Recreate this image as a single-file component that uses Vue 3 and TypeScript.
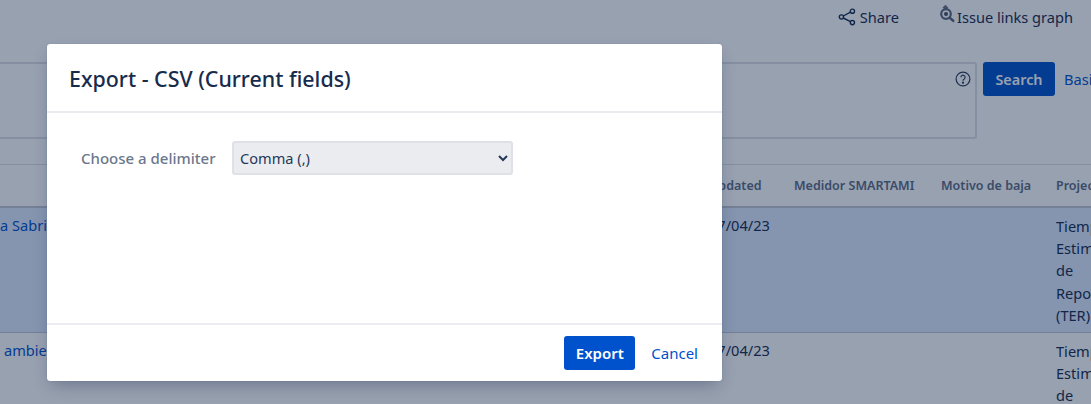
<script setup lang="ts">
interface Row {
  summary: string
  updated: string
  project: string[]
  selected: boolean
}
const headers = ['Updated', 'Medidor SMARTAMI', 'Motivo de baja', 'Project']
const rows: Row[] = [
  { summary: 'a Sabrina', updated: '27/04/23', project: ['Tiempo', 'Estimado', 'de', 'Reporte', '(TER)'], selected: true },
  { summary: 'ambiente', updated: '27/04/23', project: ['Tiempo', 'Estimado', 'de', 'Reporte', '(TER)'], selected: false },
]
</script>

<template>
  <div class="page">
    <div class="toolbar">
      <a class="tool share">
        <svg width="18" height="18" viewBox="0 0 18 18" fill="none" stroke="#172b4d" stroke-width="1.4">
          <circle cx="3.4" cy="9" r="2.1" />
          <circle cx="14.4" cy="3.2" r="2.1" />
          <circle cx="14.4" cy="14.6" r="2.1" />
          <path d="M5.3 8 12.5 4.2M5.3 10l7.2 3.6" />
        </svg>
        <span>Share</span>
      </a>
      <a class="tool graph">
        <svg width="19" height="20" viewBox="0 0 19 20">
          <path d="M4.5 3.5 7.5.8l2.8 3-2.4 2.6z" fill="#6b7487" />
          <circle cx="8" cy="10" r="4.8" fill="none" stroke="#5f687c" stroke-width="2.2" />
          <circle cx="8" cy="10" r="2" fill="#454f66" />
          <path d="m11.6 13.6 3.6 3.2" stroke="#5f687c" stroke-width="2.6" stroke-linecap="round" />
        </svg>
        <span>Issue links graph</span>
      </a>
    </div>

    <div class="search-row">
      <div class="jql">
        <svg class="help" width="16" height="16" viewBox="0 0 16 16" fill="none" stroke="#2f3c57" stroke-width="1.2">
          <circle cx="8" cy="8" r="6.9" />
          <path d="M5.9 6.3a2.1 2.1 0 1 1 3.3 1.7c-.8.5-1.2.9-1.2 1.8" />
          <circle cx="8" cy="11.7" r=".5" fill="#2f3c57" />
        </svg>
      </div>
      <button class="search" type="button">Search</button>
      <a class="basic">Basic</a>
    </div>

    <div class="table">
      <div class="tr head">
        <div></div>
        <div v-for="h in headers" :key="h" class="th">{{ h }}</div>
      </div>
      <div v-for="r in rows" :key="r.summary" class="tr" :class="{ selected: r.selected }">
        <div class="summary">{{ r.summary }}</div>
        <div class="td">{{ r.updated }}</div>
        <div class="td"></div>
        <div class="td"></div>
        <div class="td project">
          <div v-for="(line, i) in r.project" :key="i">{{ line }}</div>
        </div>
      </div>
    </div>

    <div class="blanket"></div>

    <section class="dialog">
      <header class="dialog-head">
        <h2>Export - CSV (Current fields)</h2>
      </header>
      <div class="dialog-body">
        <label class="field-label" for="delimiter">Choose a delimiter</label>
        <select id="delimiter" class="select">
          <option>Comma (,)</option>
        </select>
      </div>
      <footer class="dialog-foot">
        <button class="export" type="button">Export</button>
        <a class="cancel">Cancel</a>
      </footer>
    </section>
  </div>
</template>

<style>
html, body { margin: 0; overflow: hidden; background: #fff; }
</style>

<style scoped>
.page {
  position: relative;
  width: 1091px;
  height: 404px;
  overflow: hidden;
  background: #fff;
  color: #172b4d;
  font-family: "Noto Sans", "Open Sans", sans-serif;
  font-size: 14.6px;
  line-height: 20px;
}
.toolbar {
  display: flex;
  justify-content: flex-end;
  align-items: center;
  gap: 39px;
  height: 34px;
  padding-right: 18px;
  box-sizing: border-box;
}
.tool { display: flex; align-items: center; color: #172b4d; }
.share { gap: 4px; }
.share svg { margin-top: -1px; }
.graph svg { margin-top: -6px; }
.search-row {
  display: flex;
  align-items: flex-start;
  height: 77px;
  margin-top: 28px;
  margin-left: -2px;
}
.jql {
  flex: 0 0 979px;
  height: 77px;
  box-sizing: border-box;
  border: 2px solid #dfe1e6;
  border-radius: 3px;
  display: flex;
  justify-content: flex-end;
  padding: 7px 4px;
}
.search {
  flex: 0 0 72px;
  margin-left: 6px;
  height: 34px;
  border: 0;
  border-radius: 3px;
  background: #0052cc;
  color: #fff;
  font: 600 14.4px "Noto Sans", sans-serif;
  padding: 0;
}
.basic { margin-left: 9px; margin-top: 7px; color: #0052cc; }
.table { margin-top: 25px; }
.tr {
  display: grid;
  grid-template-columns: 709px 85px 147px 115px 60px;
  border-bottom: 1px solid #c1c7d0;
  white-space: nowrap;
}
.head {
  height: 44px;
  box-sizing: border-box;
  border-top: 1px solid #dfe1e6;
  border-bottom: 2px solid #c1c7d0;
  align-items: center;
  padding-top: 1px;
}
.th { font-size: 12.5px; font-weight: 600; color: #5e6c84; }
.tr:not(.head) { height: 125px; box-sizing: border-box; }
.selected { background: #deebff; }
.summary { color: #0052cc; padding-top: 7px; overflow: hidden; }
.tr:nth-child(3) .summary { padding-left: 4px; }
.td { padding-top: 7px; }
.project { line-height: 22.2px; padding-top: 7px; overflow: hidden; }
.blanket {
  position: absolute;
  inset: 0;
  background: rgba(9, 30, 66, 0.42);
}
.dialog {
  position: absolute;
  left: 47px;
  top: 44px;
  width: 675px;
  height: 337px;
  display: flex;
  flex-direction: column;
  background: #fff;
  border-radius: 3px;
  box-shadow: 0 8px 16px -4px rgba(9, 30, 66, 0.3), 0 0 1px rgba(9, 30, 66, 0.3);
}
.dialog-head {
  height: 67px;
  box-sizing: content-box;
  display: flex;
  align-items: center;
  padding: 0 22px;
  border-bottom: 2px solid #ebecf0;
}
h2 {
  margin: 3px 0 0;
  font-size: 21.4px;
  font-weight: 500;
  color: #172b4d;
  line-height: 28px;
  white-space: nowrap;
}
.dialog-body {
  flex: 1;
  display: flex;
  align-items: flex-start;
  padding: 28px 0 0 34px;
}
.field-label {
  width: 151px;
  color: #6b778c;
  font-weight: 500;
  line-height: 34px;
  font-size: 15px;
  white-space: nowrap;
}
.select {
  width: 281px;
  height: 34px;
  box-sizing: border-box;
  border: 2px solid #dfe1e6;
  border-radius: 3px;
  background-color: #ebecf0;
  color: #253858;
  font: 14.6px "Noto Sans", sans-serif;
  padding: 0 2px;
}
.dialog-foot {
  height: 56px;
  display: flex;
  justify-content: flex-end;
  align-items: center;
  gap: 16px;
  padding-right: 24px;
  border-top: 2px solid #ebecf0;
}
.export {
  width: 71px;
  height: 34px;
  border: 0;
  border-radius: 3px;
  background: #0052cc;
  color: #fff;
  font: 600 15px "Noto Sans", sans-serif;
  padding: 0;
}
.cancel { color: #0052cc; font-size: 15px; }
</style>
